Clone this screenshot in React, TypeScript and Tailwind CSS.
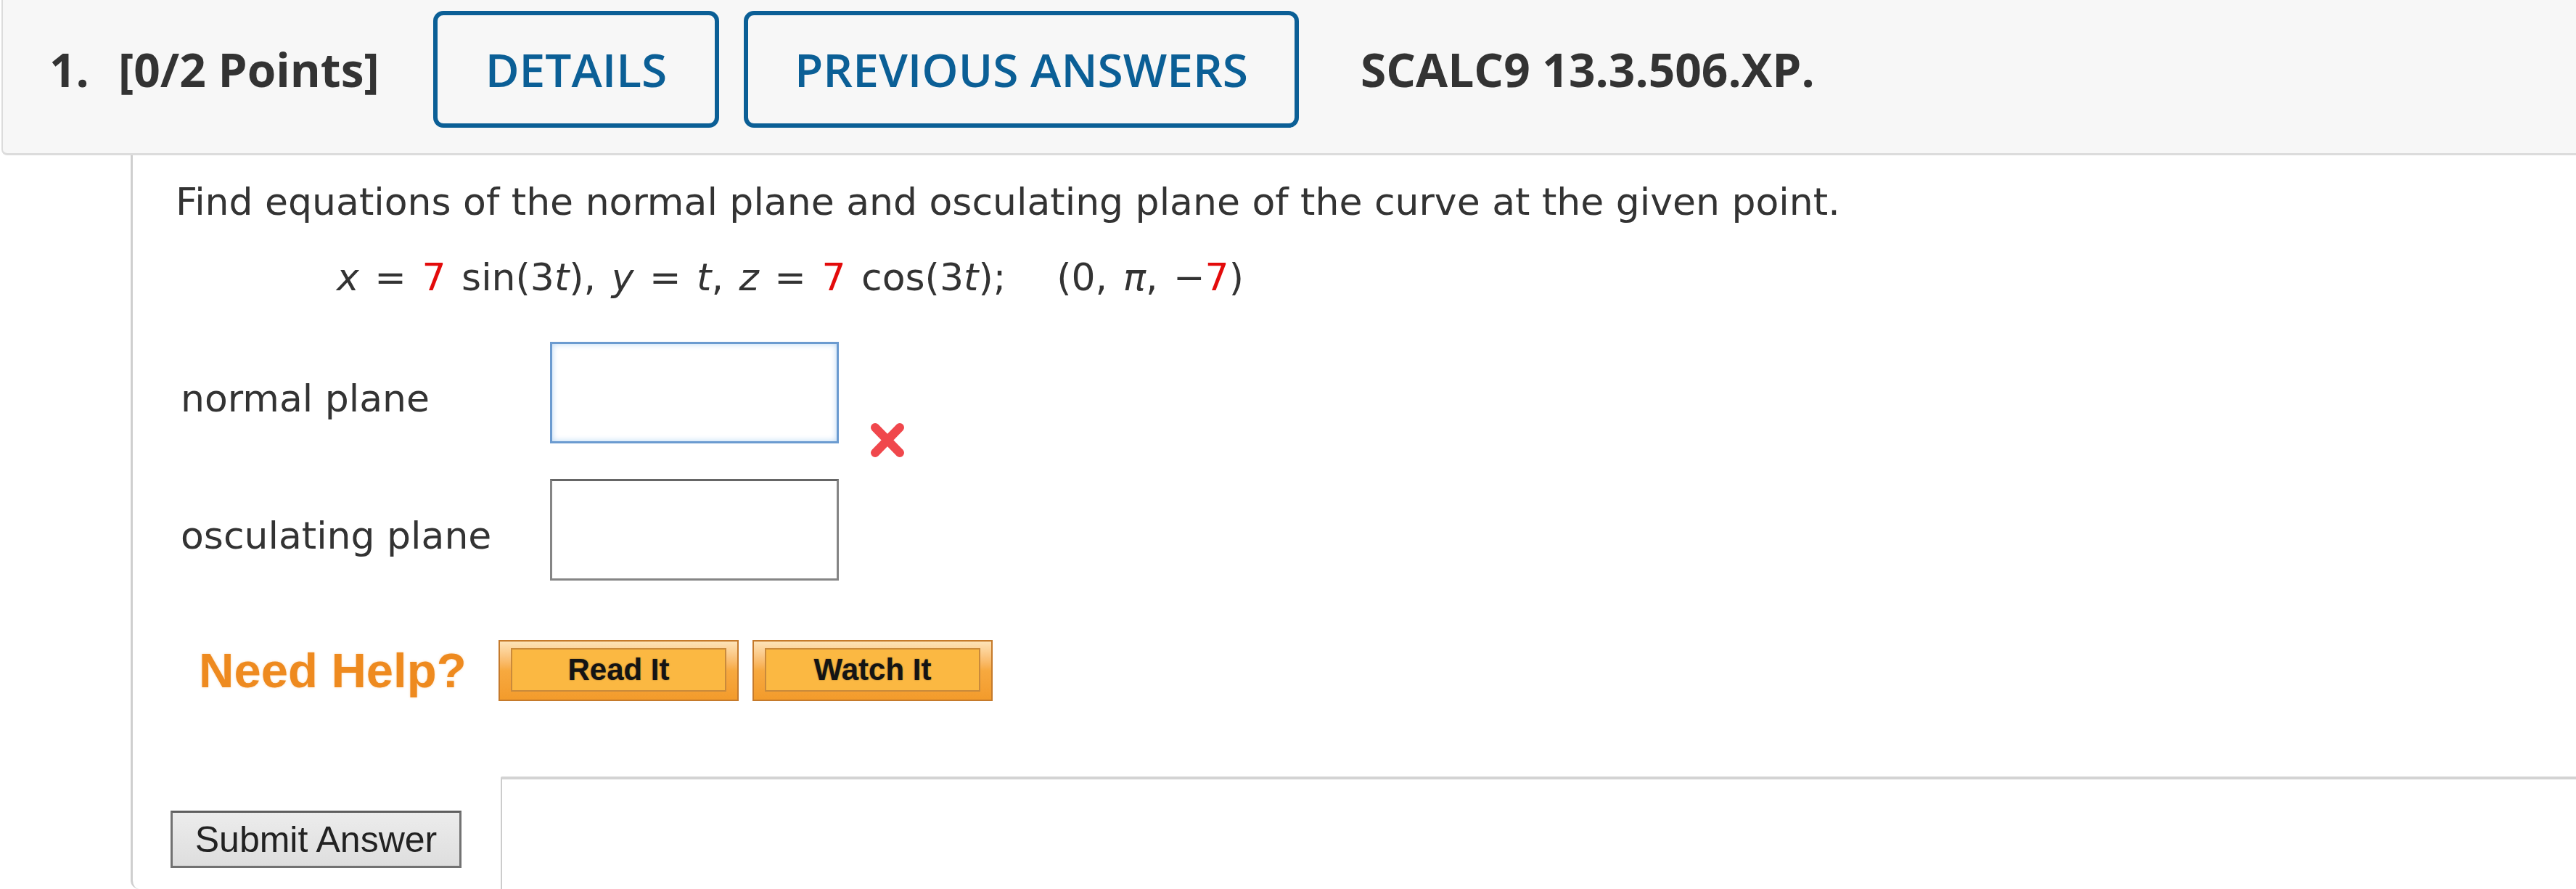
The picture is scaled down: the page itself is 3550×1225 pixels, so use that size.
function Red({ children }: { children: React.ReactNode }) {
  return <span className="text-[#e30b0b]">{children}</span>;
}

function OrangeButton({ label }: { label: string }) {
  return (
    <div className="w-[331px] h-[84px] border-2 border-[#c57a2b] bg-gradient-to-b from-[#fde3b8] via-[#f7a93f] to-[#f39b2b] pt-[9px] pb-[11px] px-[15px]">
      <div className="h-full border-2 border-[#c98a3b] bg-[#fbb842] flex items-center justify-center font-['Liberation_Sans',Arial,sans-serif] font-bold text-[42px] text-[#141414] [text-shadow:0_0_2px_rgba(0,0,0,0.45)]">
        {label}
      </div>
    </div>
  );
}

function XMark() {
  return (
    <svg width="54" height="53" viewBox="0 0 54 53" className="mt-[109px] ml-[40px] blur-[0.6px]">
      <path d="M10 9 L44 44 M44 9 L10 44" stroke="#f0474c" strokeWidth="12" strokeLinecap="round" />
    </svg>
  );
}

export default function App() {
  const body = "font-['DejaVu_Sans',Verdana,sans-serif] text-[52px] leading-[normal] text-[#333]";
  return (
    <div className="w-[3550px] h-[1225px] bg-white overflow-hidden">
      {/* question header */}
      <div className="ml-[2px] bg-[#f7f7f7] border-l-2 border-b-[3px] border-[#dcdcdc] rounded-bl-[8px] pt-[15px] pb-[35px] pl-[64px] flex items-center font-['Open_Sans',sans-serif] text-[64px] text-[#333] font-bold">
        <span className="w-[95px]">1.</span>
        <span className="w-[434px]">[0/2 Points]</span>
        <div className="w-[394px] h-[161px] border-[6px] border-[#0b5f96] rounded-[14px] flex items-center justify-center text-[#0b5f96] font-semibold">
          DETAILS
        </div>
        <div className="ml-[34px] w-[765px] h-[161px] border-[6px] border-[#0b5f96] rounded-[14px] flex items-center justify-center text-[#0b5f96] font-semibold">
          PREVIOUS ANSWERS
        </div>
        <span className="ml-[85px]">SCALC9 13.3.506.XP.</span>
      </div>

      {/* question body */}
      <div className={`ml-[180px] h-[1011px] border-l-[3px] border-[#cfcfcf] rounded-bl-[12px] pt-[34px] ${body}`}>
        <p className="pl-[59px]">Find equations of the normal plane and osculating plane of the curve at the given point.</p>
        <p className="mt-[44px] pl-[281px] whitespace-pre [word-spacing:5px]">
          <i>x</i> = <Red>7</Red> sin(3<i>t</i>), <i>y</i> = <i>t</i>, <i>z</i> = <Red>7</Red> cos(3<i>t</i>);
          <span className="inline-block w-[70px]" />(0, <i>π</i>, −<Red>7</Red>)
        </p>

        <div className="mt-[59px] h-[140px] pl-[66px] flex items-start">
          <span className="w-[509px] pt-[48px]">normal plane</span>
          <div className="w-[398px] h-[140px] border-[3px] border-[#6b9bd0] shadow-[inset_0_0_8px_#b7d6f4] bg-white" />
          <XMark />
        </div>
        <div className="mt-[49px] h-[140px] pl-[66px] flex items-start">
          <span className="w-[509px] pt-[48px]">osculating plane</span>
          <div className="w-[398px] h-[140px] border-[3px] border-[#858585] border-t-[#666] bg-white" />
        </div>

        <div className="mt-[82px] pl-[91px] flex items-start">
          <span className="mt-[3px] w-[413px] font-['Liberation_Sans',Arial,sans-serif] font-bold text-[67px] leading-[normal] text-[#ee8a1f] [text-shadow:0_0_3px_rgba(238,138,31,0.35)]">
            Need Help?
          </span>
          <OrangeButton label="Read It" />
          <div className="w-[19px]" />
          <OrangeButton label="Watch It" />
        </div>

        <div className="mt-[104px] pl-[52px] flex items-start">
          <button className="mt-[47px] w-[401px] h-[79px] border-[3px] border-[#727272] border-t-[#5e5e5e] bg-gradient-to-b from-[#ececec] to-[#dedede] font-['Liberation_Sans',Arial,sans-serif] text-[50px] text-[#222] leading-none">
            Submit Answer
          </button>
          <div className="ml-[54px] flex-1 h-[200px] border-t-4 border-l-2 border-t-[#d3d3d3] border-l-[#cccccc] rounded-tl-[2px]" />
        </div>
      </div>
    </div>
  );
}
